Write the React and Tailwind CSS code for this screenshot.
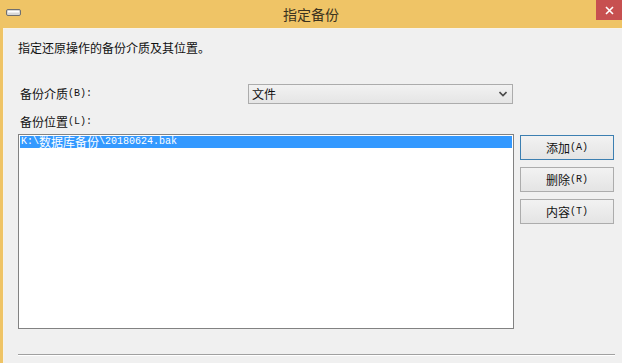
import React from "react";

const cjk = { fontFamily: '"Noto Sans CJK SC", "Noto Sans", sans-serif' };
const mono = { fontFamily: '"Liberation Mono", "Noto Sans CJK SC", monospace' };

function Btn({ children, primary }) {
  return (
    <div
      className={`h-[25px] w-[94px] flex items-center justify-center text-[12px] leading-[12px] text-[#111] bg-gradient-to-b from-[#F2F2F2] to-[#E4E4E4] border ${
        primary ? "border-[#3C7FB1]" : "border-[#ACACAC]"
      }`}
      style={cjk}
    >
      {children}
    </div>
  );
}

export default function App() {
  return (
    <div className="w-[622px] h-[363px] overflow-hidden bg-[#EFC466] flex flex-col" style={cjk}>
      <div className="h-[28px] shrink-0 grid grid-cols-[1fr_auto_1fr] items-start">
        <div className="pt-[9px] pl-[6px]">
          <svg width="15" height="7" viewBox="0 0 15 7">
            <rect x="0.5" y="0.5" width="14" height="6" rx="1.5" fill="#D8D8D8" stroke="#6F6F6F" />
            <rect x="2" y="2" width="11" height="1.5" fill="#FFFFFF" />
          </svg>
        </div>
        <div className="pt-[5px] text-[14px] leading-[18px] text-[#3B3320]">指定备份</div>
        <div className="flex justify-end">
          <div className="w-[26px] h-[20px] bg-[#C75050] flex items-center justify-center">
            <svg width="9" height="9" viewBox="0 0 9 9">
              <path d="M1 1 L8 8 M8 1 L1 8" stroke="#FFFFFF" strokeWidth="1.6" />
            </svg>
          </div>
        </div>
      </div>
      <div className="flex-1 ml-[3px] bg-[#F0F0F0] border-l border-t border-[#F7F3EA] pl-[14px] pr-[7px] pt-[13px] flex flex-col">
        <div className="h-[12px] flex items-center text-[12px] leading-[12px] text-[#111]">指定还原操作的备份介质及其位置。</div>
        <div className="mt-[30px] h-[20px] flex items-center">
          <div className="w-[230px] h-[12px] pl-[2px] flex items-center text-[12px] leading-[12px] text-[#111]">
            备份介质<span style={mono} className="text-[10px] leading-[12px]">(B):</span>
          </div>
          <div className="w-[265px] h-[20px] border border-[#ACACAC] bg-gradient-to-b from-[#F2F2F2] to-[#E5E5E5] flex items-center justify-between pl-[3px] pr-[5px]">
            <span className="text-[12px] leading-[12px] text-[#111]">文件</span>
            <svg width="8" height="6" viewBox="0 0 8 6">
              <path d="M0.5 1 L4 4.5 L7.5 1" stroke="#4A4A4A" strokeWidth="1.6" fill="none" />
            </svg>
          </div>
        </div>
        <div className="mt-[12px] h-[12px] pl-[2px] flex items-center text-[12px] leading-[12px] text-[#111]">
          备份位置<span style={mono} className="text-[10px] leading-[12px]">(L):</span>
        </div>
        <div className="mt-[6px] flex gap-[6px]">
          <div className="w-[496px] h-[195px] border border-[#828282] bg-white p-[1px]">
            <div className="h-[12px] bg-[#3399FF] text-white flex items-center text-[12px] leading-[12px] pl-[1px]">
              <span style={mono} className="text-[10px] leading-[12px]">K:\</span>
              <span>数据库备份</span>
              <span style={mono} className="text-[10px] leading-[12px]">\20180624.bak</span>
            </div>
          </div>
          <div className="flex flex-col gap-[7px] pt-[1px]">
            <Btn primary>
              添加<span style={mono} className="text-[10px] leading-[12px]">(A)</span>
            </Btn>
            <Btn>
              删除<span style={mono} className="text-[10px] leading-[12px]">(R)</span>
            </Btn>
            <Btn>
              内容<span style={mono} className="text-[10px] leading-[12px]">(T)</span>
            </Btn>
          </div>
        </div>
        <div className="mt-[25px] h-[2px] w-[597px] border-t border-[#A0A0A0] border-b border-b-white" />
      </div>
    </div>
  );
}
